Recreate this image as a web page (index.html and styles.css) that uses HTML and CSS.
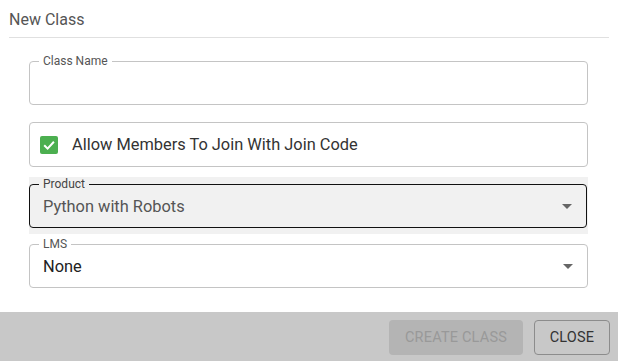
FILE: index.html
```html
<!DOCTYPE html>
<html>
<head>
<meta charset="utf-8">
<link rel="stylesheet" href="styles.css">
</head>
<body>
<div class="dialog">
  <div class="header">
    <h1 class="title">New Class</h1>
  </div>
  <div class="content">
    <div class="field">
      <span class="label">Class Name</span>
    </div>
    <div class="field check-field">
      <span class="checkbox">
        <svg width="18" height="18" viewBox="0 0 18 18"><path d="M4.2 9.3 L7.6 12.6 L13.9 5.8" fill="none" stroke="#fff" stroke-width="2"/></svg>
      </span>
      <span class="check-text">Allow Members To Join With Join Code</span>
    </div>
    <div class="focus-wrap">
      <div class="field select focused">
        <span class="label">Product</span>
        <span class="value muted">Python with Robots</span>
        <span class="arrow"></span>
      </div>
    </div>
    <div class="field select last">
      <span class="label">LMS</span>
      <span class="value">None</span>
      <span class="arrow"></span>
    </div>
  </div>
  <div class="footer">
    <button class="btn btn-disabled">Create Class</button>
    <button class="btn btn-outline">Close</button>
  </div>
</div>
</body>
</html>
```
FILE: styles.css
```css
* { box-sizing: border-box; }
html, body { margin: 0; padding: 0; background: #fff; }
body { font-family: Roboto, "Noto Sans", sans-serif; width: 618px; height: 361px; overflow: hidden; }
.dialog { display: flex; flex-direction: column; height: 361px; }
.header { padding: 0 9px; }
.title {
  margin: 0; font-weight: 400; font-size: 16px; color: #555;
  height: 38px; line-height: 40px; border-bottom: 1px solid #e0e0e0;
}
.content { padding: 23px 30px 0 29px; display: flex; flex-direction: column; }
.field {
  position: relative; height: 44px; border: 1px solid #c4c4c4; border-radius: 4px;
  display: flex; align-items: center; padding: 0 13px;
}
.label {
  position: absolute; top: -8px; left: 9px; padding: 0 4px; background: #fff;
  font-size: 12px; line-height: 14px; color: #555;
}
.check-field { margin-top: 17px; height: 45px; padding-left: 10px; }
.checkbox {
  width: 18px; height: 18px; background: #4caf50; border-radius: 2px;
  display: inline-flex; margin-right: 14px;
}
.check-text { font-size: 16.4px; color: #333; }
.focus-wrap { margin-top: 10px; background: #f1f1f1; padding: 7px 1px 6px 0; }
.focused { border-color: #111; }
.focused .label { background: #f1f1f1; color: #444; }
.select { padding-top: 1px; }
.value { font-size: 16.4px; color: #222; }
.value.muted { color: #555; }
.arrow {
  position: absolute; right: 14px; top: 19px; width: 0; height: 0;
  border-left: 5px solid transparent; border-right: 5px solid transparent; border-top: 5px solid #666;
}
.last { margin-top: 10px; }
.footer {
  margin-top: auto; height: 49px; background: #c8c8c8;
  display: flex; justify-content: flex-end; align-items: center; gap: 11px; padding: 1px 8px 0 0;
}
.btn {
  font-family: Roboto, "Noto Sans", sans-serif; font-size: 14.5px; text-transform: uppercase;
  height: 35px; border-radius: 4px; padding: 0; letter-spacing: 0.2px;
}
.btn-disabled { width: 134px; background: #b4b4b4; border: none; color: #999; }
.btn-outline { width: 76px; background: transparent; border: 1px solid #8c8c8c; color: #333; }
```
